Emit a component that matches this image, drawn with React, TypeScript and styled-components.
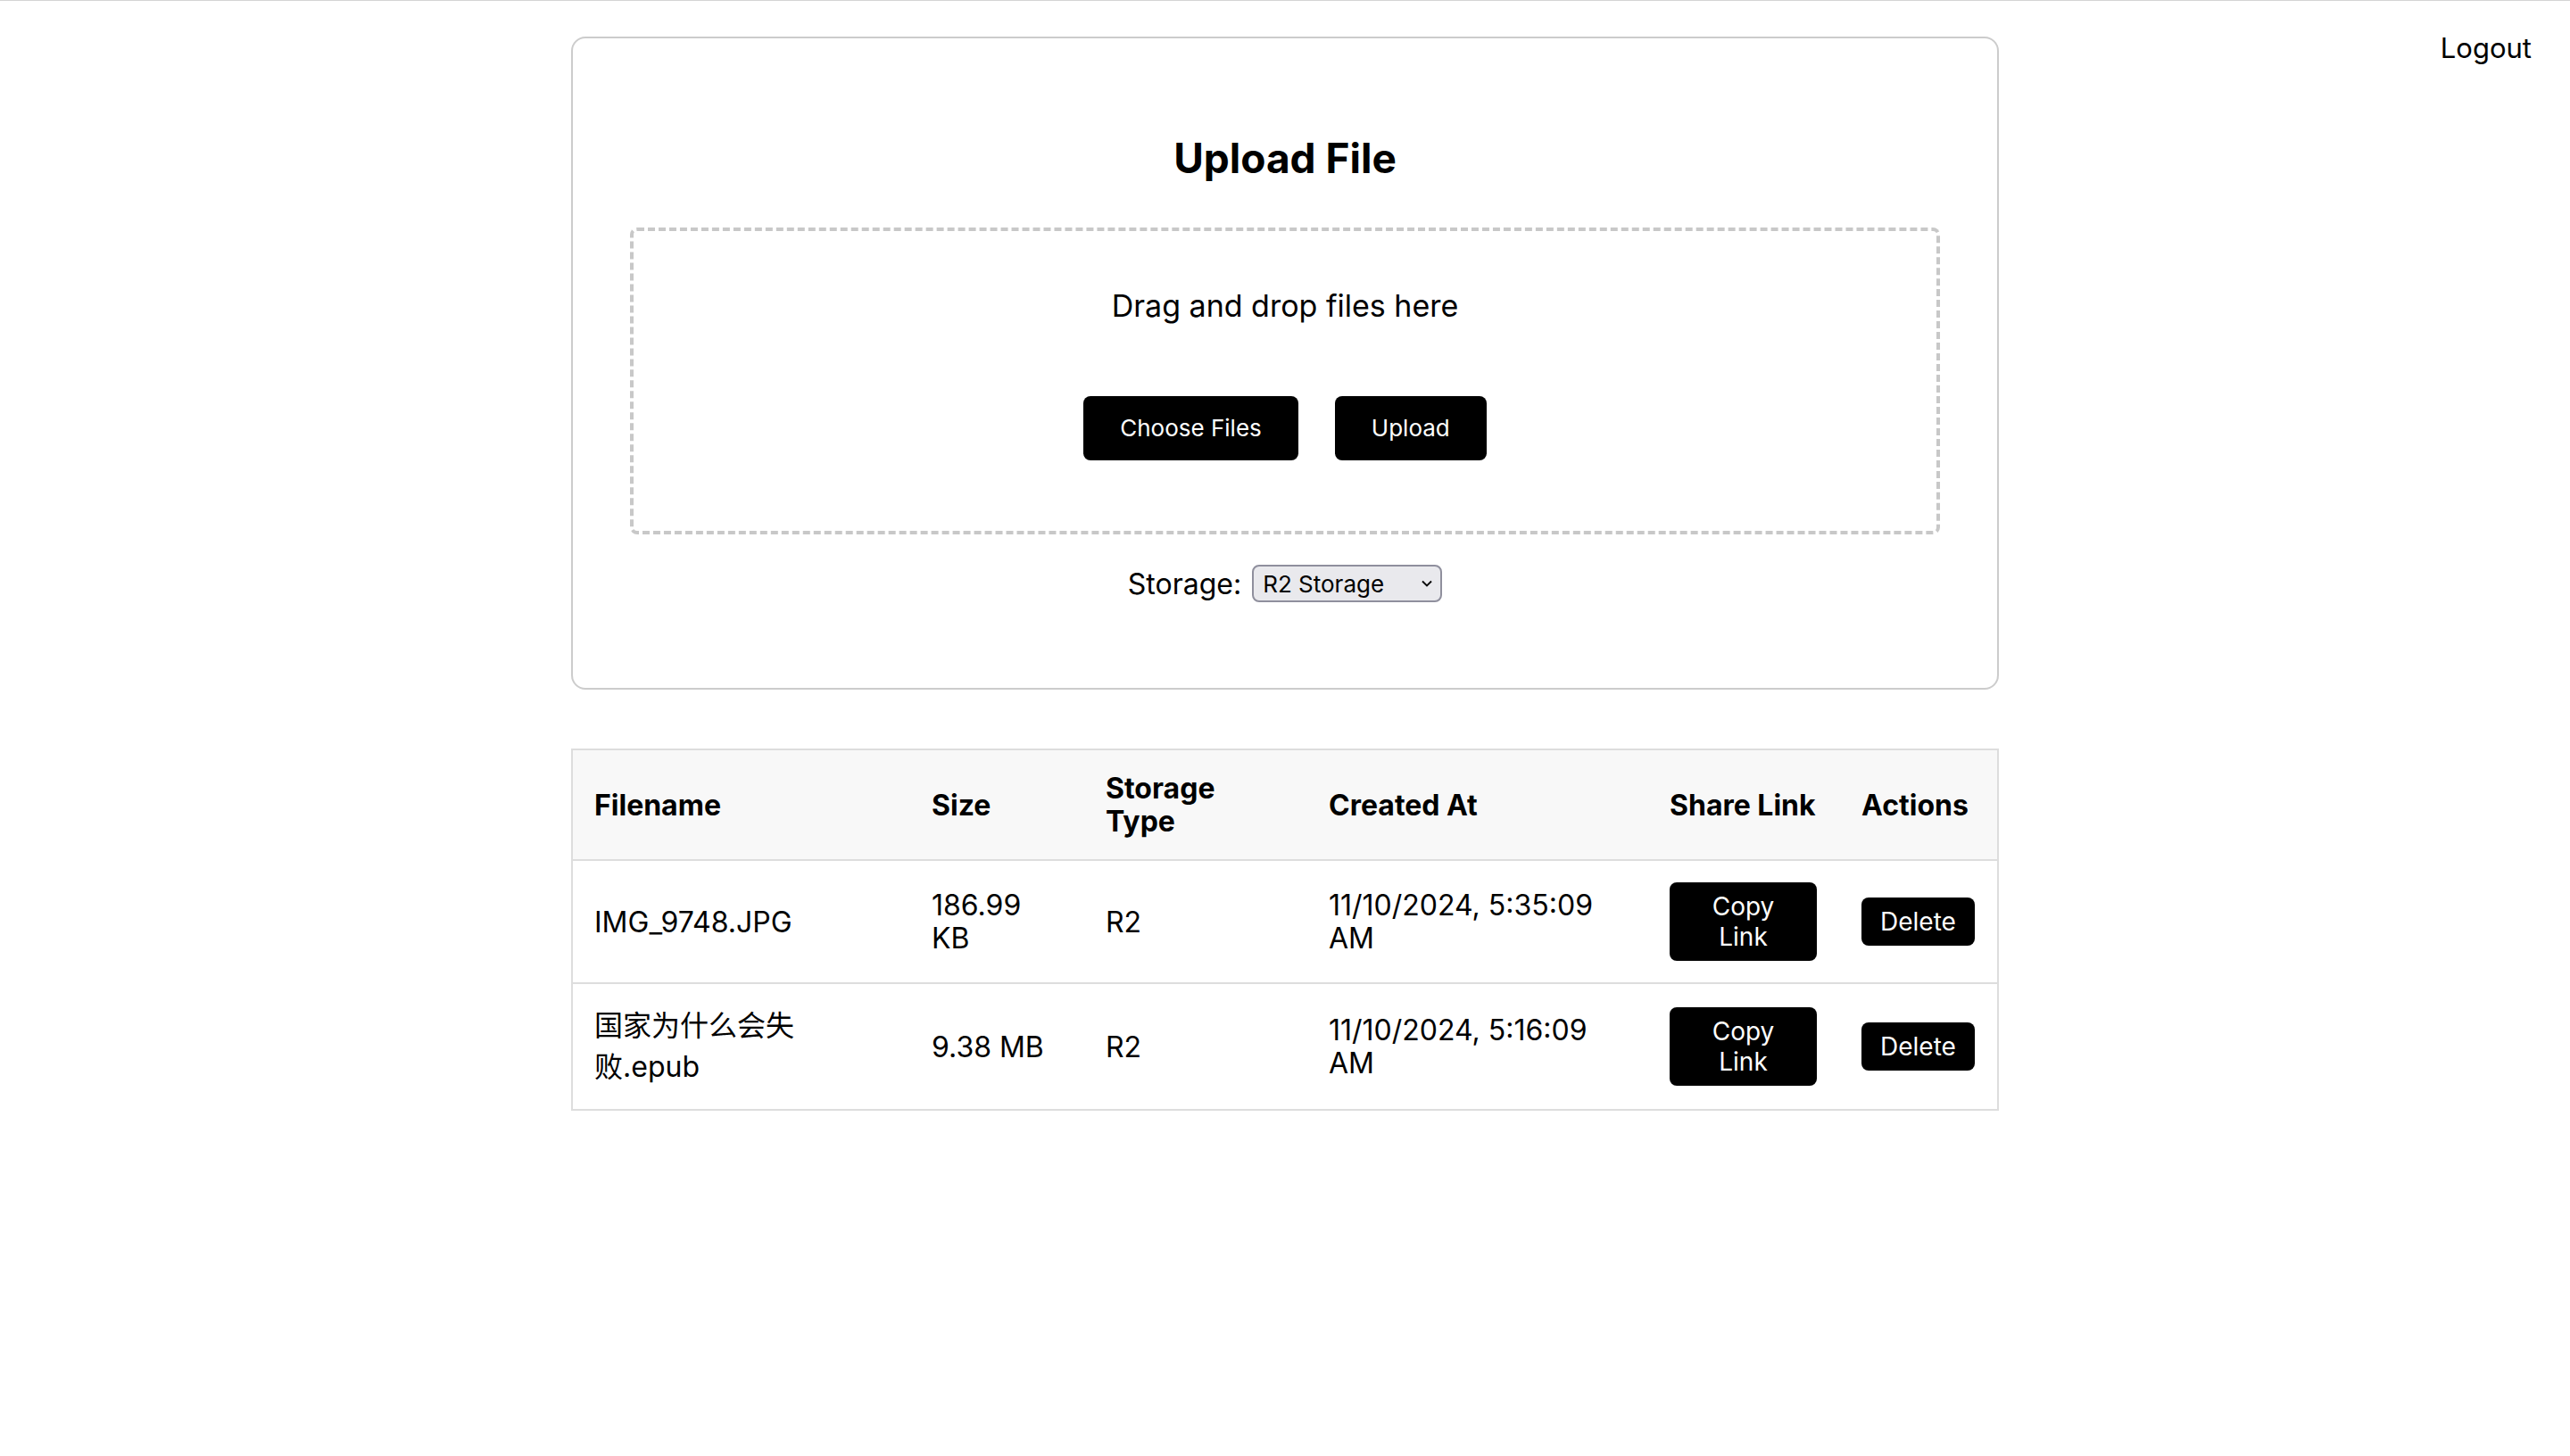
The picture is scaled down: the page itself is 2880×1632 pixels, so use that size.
import React from "react";
import styled, { createGlobalStyle } from "styled-components";

const GlobalStyle = createGlobalStyle`
  html, body { margin: 0; padding: 0; background: #fff; }
  body {
    font-family: Inter, "Noto Sans CJK SC", sans-serif;
    color: #000;
    border-top: 1px solid #d4d4d4;
  }
  * { box-sizing: border-box; }
`;

const Page = styled.div`
  display: grid;
  grid-template-columns: 1fr 1600px 1fr;
  align-items: start;
`;

const Main = styled.main`
  grid-column: 2;
  grid-row: 1;
  display: flex;
  flex-direction: column;
  gap: 66px;
  padding-top: 40px;
`;

const TopBar = styled.div`
  grid-column: 3;
  grid-row: 1;
  display: flex;
  justify-content: flex-end;
  padding: 33px 43px 0 0;
`;

const LogoutButton = styled.button`
  background: none;
  border: none;
  padding: 0;
  font-family: inherit;
  font-size: 31px;
  line-height: 39px;
  color: #000;
  cursor: pointer;
`;

const Card = styled.section`
  border: 2px solid #ccc;
  border-radius: 16px;
  padding: 64px;
  display: flex;
  flex-direction: column;
`;

const Title = styled.h2`
  margin: 41px 0 49px;
  text-align: center;
  font-size: 46px;
  line-height: 58px;
  font-weight: 700;
`;

const DropZone = styled.div`
  border: 4px dashed #c8c8c8;
  border-radius: 8px;
  padding: 64px 0 79px;
  display: flex;
  flex-direction: column;
  align-items: center;
  gap: 81px;
`;

const DropText = styled.p`
  margin: 0;
  font-size: 34px;
  line-height: 40px;
`;

const ButtonRow = styled.div`
  display: flex;
  gap: 41px;
`;

const DarkButton = styled.button<{ $small?: boolean; $width?: number }>`
  display: block;
  background: #000;
  color: #fff;
  border: none;
  border-radius: 8px;
  font-family: inherit;
  font-size: ${(p) => (p.$small ? "28px" : "26px")};
  line-height: ${(p) => (p.$small ? "34px" : "72px")};
  padding: ${(p) => (p.$small ? "10px 21px" : "0 41px")};
  width: ${(p) => (p.$width ? `${p.$width}px` : "auto")};
  cursor: pointer;
  text-align: center;
`;

const StorageRow = styled.div`
  margin: 34px 0 32px;
  display: flex;
  justify-content: center;
  align-items: center;
  gap: 12px;
`;

const StorageLabel = styled.label`
  font-size: 32px;
  line-height: 39px;
`;

const SelectWrap = styled.div`
  position: relative;
  width: 213px;
  height: 42px;
`;

const Select = styled.select`
  appearance: none;
  -webkit-appearance: none;
  width: 100%;
  height: 100%;
  background: #e9e9ed;
  border: 2px solid #8f8f9d;
  border-radius: 8px;
  font-family: inherit;
  font-size: 26px;
  color: #000;
  padding: 0 0 0 10px;
`;

const Chevron = styled.svg`
  position: absolute;
  right: 11px;
  top: 17px;
  pointer-events: none;
`;

const Table = styled.table`
  width: 100%;
  border-collapse: separate;
  border-spacing: 0;
  border: 2px solid #ddd;
  table-layout: fixed;
`;

const Th = styled.th<{ $nowrap?: boolean }>`
  text-align: left;
  font-weight: 700;
  font-size: 32px;
  line-height: 37px;
  background: #f8f8f8;
  padding: 24px;
  vertical-align: middle;
  border-bottom: 2px solid #ddd;
  white-space: ${(p) => (p.$nowrap ? "nowrap" : "normal")};
`;

const Row = styled.tr`
  &:last-child td {
    border-bottom: none;
  }
`;

const Td = styled.td<{ $cjk?: boolean }>`
  font-size: 32px;
  line-height: ${(p) => (p.$cjk ? "46px" : "37px")};
  padding: 24px;
  vertical-align: middle;
  border-bottom: 2px solid #ddd;
`;

const files = [
  {
    name: "IMG_9748.JPG",
    size: "186.99 KB",
    type: "R2",
    created: "11/10/2024, 5:35:09 AM",
    cjk: false,
  },
  {
    name: "国家为什么会失败.epub",
    size: "9.38 MB",
    type: "R2",
    created: "11/10/2024, 5:16:09 AM",
    cjk: true,
  },
];

const colWidths = [378, 195, 250, 382, 215, 176];

export default function App() {
  return (
    <>
      <GlobalStyle />
      <Page>
        <Main>
          <Card>
            <Title>Upload File</Title>
            <DropZone>
              <DropText>Drag and drop files here</DropText>
              <ButtonRow>
                <DarkButton>Choose Files</DarkButton>
                <DarkButton>Upload</DarkButton>
              </ButtonRow>
            </DropZone>
            <StorageRow>
              <StorageLabel htmlFor="storage">Storage:</StorageLabel>
              <SelectWrap>
                <Select id="storage" defaultValue="r2">
                  <option value="r2">R2 Storage</option>
                </Select>
                <Chevron width="12" height="8" viewBox="0 0 12 8">
                  <path d="M1 1.5 L6 6.5 L11 1.5" fill="none" stroke="#000" strokeWidth="1.8" />
                </Chevron>
              </SelectWrap>
            </StorageRow>
          </Card>
          <Table>
            <colgroup>
              {colWidths.map((w, i) => (
                <col key={i} style={{ width: w }} />
              ))}
            </colgroup>
            <thead>
              <tr>
                <Th>Filename</Th>
                <Th>Size</Th>
                <Th>Storage Type</Th>
                <Th>Created At</Th>
                <Th $nowrap>Share Link</Th>
                <Th $nowrap>Actions</Th>
              </tr>
            </thead>
            <tbody>
              {files.map((f) => (
                <Row key={f.name}>
                  <Td $cjk={f.cjk}>{f.name}</Td>
                  <Td>{f.size}</Td>
                  <Td>{f.type}</Td>
                  <Td>{f.created}</Td>
                  <Td>
                    <DarkButton $small $width={165}>Copy Link</DarkButton>
                  </Td>
                  <Td>
                    <DarkButton $small>Delete</DarkButton>
                  </Td>
                </Row>
              ))}
            </tbody>
          </Table>
        </Main>
        <TopBar>
          <LogoutButton>Logout</LogoutButton>
        </TopBar>
      </Page>
    </>
  );
}
